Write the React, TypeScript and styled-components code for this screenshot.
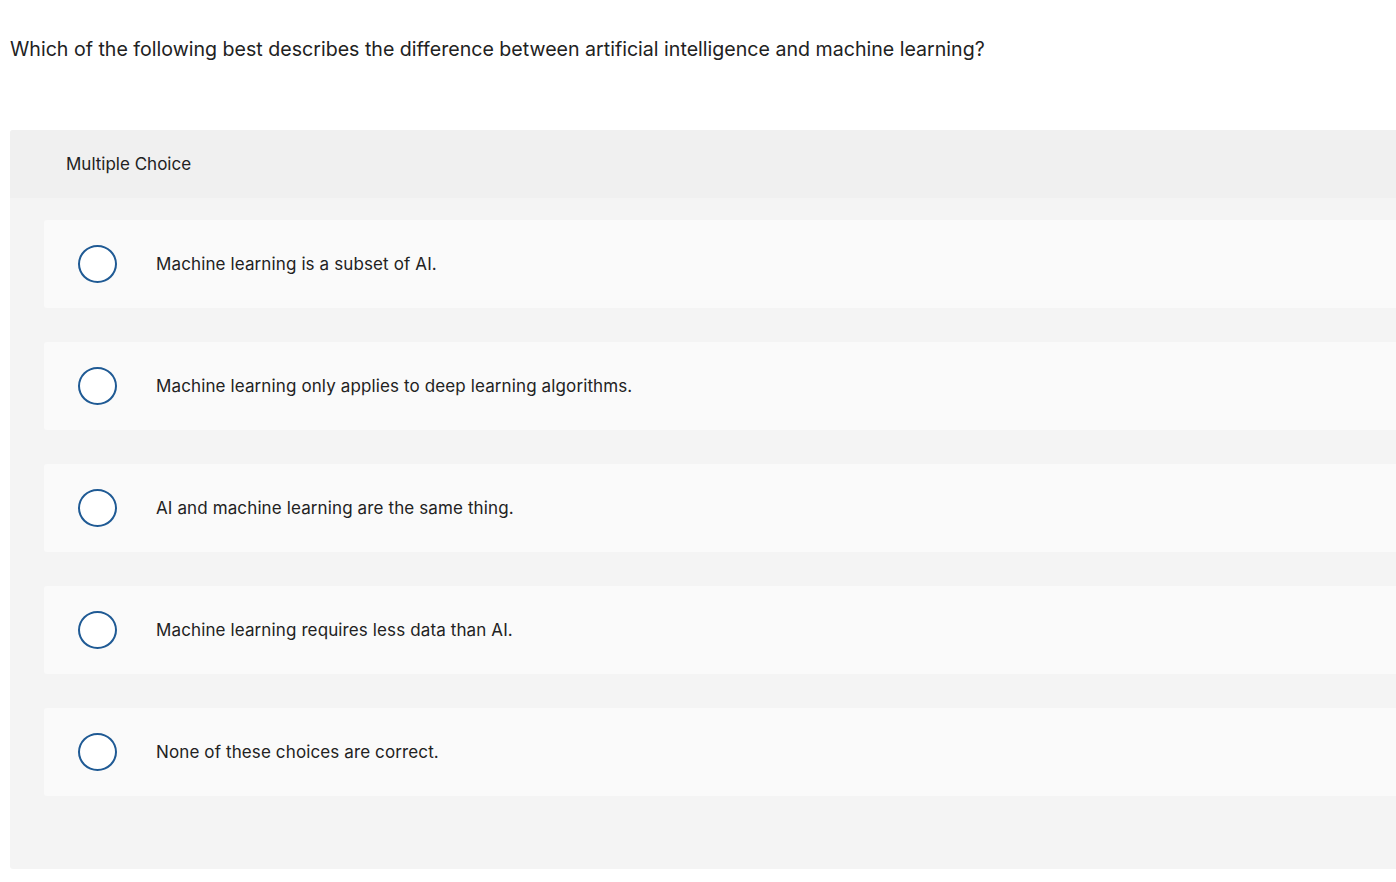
import React from "react";
import styled, { createGlobalStyle } from "styled-components";

const Global = createGlobalStyle`
  html, body { margin: 0; padding: 0; background: #ffffff; }
  body { overflow: hidden; font-family: Inter, "Noto Sans", Arial, sans-serif; color: #222; }
`;

const Page = styled.div`
  padding: 0 0 0 10px;
  width: 1430px;
`;

const Question = styled.p`
  margin: 0;
  padding-top: 37px;
  height: 130px;
  box-sizing: border-box;
  font-size: 19.6px;
  line-height: 24px;
  color: #222;
`;

const Card = styled.section`
  background: #f4f4f4;
  border-radius: 3px;
  overflow: hidden;
  padding-bottom: 73px;
`;

const Header = styled.div`
  height: 68px;
  background: #f0f0f0;
  display: flex;
  align-items: center;
  padding-left: 56px;
  font-size: 17px;
  color: #222;
`;

const List = styled.div`
  display: flex;
  flex-direction: column;
  gap: 34px;
  padding: 22px 0 0 34px;
`;

const Row = styled.label`
  height: 88px;
  background: #fafafa;
  border-radius: 3px 0 0 3px;
  display: flex;
  align-items: center;
  padding-left: 34px;
  font-size: 17px;
  letter-spacing: 0.12px;
  color: #222;
`;

const Radio = styled.span`
  width: 35px;
  height: 34px;
  border: 2px solid #1f5a94;
  border-radius: 50%;
  background: #fff;
  flex: none;
  margin-right: 39px;
`;

const options = [
  "Machine learning is a subset of AI.",
  "Machine learning only applies to deep learning algorithms.",
  "AI and machine learning are the same thing.",
  "Machine learning requires less data than AI.",
  "None of these choices are correct.",
];

export default function App() {
  return (
    <>
      <Global />
      <Page>
        <Question>
          Which of the following best describes the difference between artificial intelligence and machine learning?
        </Question>
        <Card>
          <Header>Multiple Choice</Header>
          <List>
            {options.map((o) => (
              <Row key={o}>
                <Radio />
                {o}
              </Row>
            ))}
          </List>
        </Card>
      </Page>
    </>
  );
}
